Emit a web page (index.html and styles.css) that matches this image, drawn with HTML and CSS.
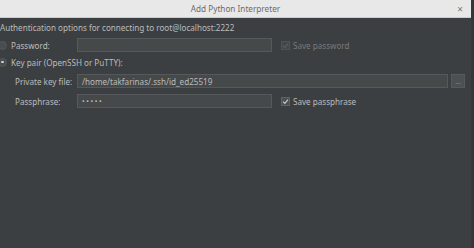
FILE: index.html
```html
<!DOCTYPE html>
<html>
<head>
<meta charset="utf-8">
<link rel="stylesheet" href="styles.css">
</head>
<body>
<div class="window">
  <div class="titlebar">
    <span class="title">Add Python Interpreter</span>
    <span class="close">×</span>
  </div>
  <div class="content">
    <div class="header">Authentication options for connecting to root@localhost:2222</div>
    <div class="row row-pass">
      <span class="lead"><span class="radio"></span><span class="label">Password:</span></span>
      <span class="field field-short"></span>
      <span class="check check-disabled"><svg viewBox="0 0 9 9" width="9" height="9"><path d="M2 4.6 L3.8 6.4 L7 2.6" fill="none" stroke="#5c5f61" stroke-width="1.1"/></svg></span>
      <span class="label disabled">Save password</span>
    </div>
    <div class="row row-key">
      <span class="radio radio-on"><span class="dot"></span></span>
      <span class="label">Key pair (OpenSSH or PuTTY):</span>
    </div>
    <div class="row row-sub">
      <span class="sublabel">Private key file:</span>
      <span class="field field-long">/home/takfarinas/.ssh/id_ed25519</span>
      <span class="browse">…</span>
    </div>
    <div class="row row-sub row-phrase">
      <span class="sublabel">Passphrase:</span>
      <span class="field field-short field-active">•••••</span>
      <span class="check check-on"><svg viewBox="0 0 9 9" width="9" height="9"><path d="M2 4.6 L3.8 6.4 L7 2.6" fill="none" stroke="#c8c8c8" stroke-width="1.2"/></svg></span>
      <span class="label">Save passphrase</span>
    </div>
  </div>
</div>
</body>
</html>
```

FILE: styles.css
```css
html, body {
  margin: 0;
  padding: 0;
}
body {
  width: 474px;
  height: 248px;
  overflow: hidden;
  background: #3c3f41;
  font-family: "Noto Sans", "DejaVu Sans", sans-serif;
  font-size: 8.1px;
  color: #bbbbbb;
}
.window {
  height: 248px;
  border-right: 3px solid #35383a;
  box-sizing: border-box;
}
.titlebar {
  position: relative;
  height: 17px;
  background: #e8e8e8;
  border-bottom: 1px solid #cdcdcd;
  display: flex;
  align-items: center;
  justify-content: center;
  color: #6c6c6c;
  font-size: 8.2px;
}
.close {
  position: absolute;
  right: 8px;
  top: 2px;
  font-size: 10px;
  color: #7a7a7a;
}
.content {
  margin-left: -2px;
  display: flex;
  flex-direction: column;
}
.header {
  height: 12px;
  line-height: 12px;
  margin-top: 4px;
  padding-left: 2px;
}
.row {
  display: flex;
  align-items: center;
}
.row-pass {
  margin-top: 4px;
  height: 14px;
}
.lead {
  display: flex;
  align-items: center;
  width: 79px;
}
.radio {
  width: 7px;
  height: 7px;
  border-radius: 50%;
  background: #4a4d4f;
  border: 1px solid #555859;
  margin-right: 4px;
  display: flex;
  align-items: center;
  justify-content: center;
  flex: none;
}
.radio-on .dot {
  width: 2.5px;
  height: 2.5px;
  border-radius: 50%;
  background: #cfcfcf;
}
.row-key {
  margin-top: 4px;
  height: 12px;
}
.row-sub {
  margin-top: 6px;
  height: 14px;
  padding-left: 17px;
}
.sublabel {
  width: 62px;
  flex: none;
}
.field {
  box-sizing: border-box;
  height: 14px;
  background: #45494a;
  border: 1px solid #56595b;
  display: flex;
  align-items: center;
  padding-left: 4px;
  color: #bbbbbb;
  flex: none;
}
.field-short {
  width: 195px;
}
.field-active {
  letter-spacing: 1.6px;
  font-size: 7px;
}
.field-long {
  width: 371px;
}
.browse {
  box-sizing: border-box;
  width: 14px;
  height: 14px;
  margin-left: 3px;
  background: #4c5052;
  border: 1px solid #57595b;
  color: #8a8a8a;
  display: flex;
  align-items: center;
  justify-content: center;
  font-size: 7px;
  line-height: 1;
}
.check {
  box-sizing: border-box;
  width: 9px;
  height: 9px;
  margin-left: 9px;
  margin-right: 3px;
  display: flex;
  border: 1px solid #505355;
  background: #43474a;
}
.check svg {
  margin: -1px;
}
.check-on {
  background: #4b4f51;
  border-color: #5f6264;
}
.disabled {
  color: #76797b;
}
```
